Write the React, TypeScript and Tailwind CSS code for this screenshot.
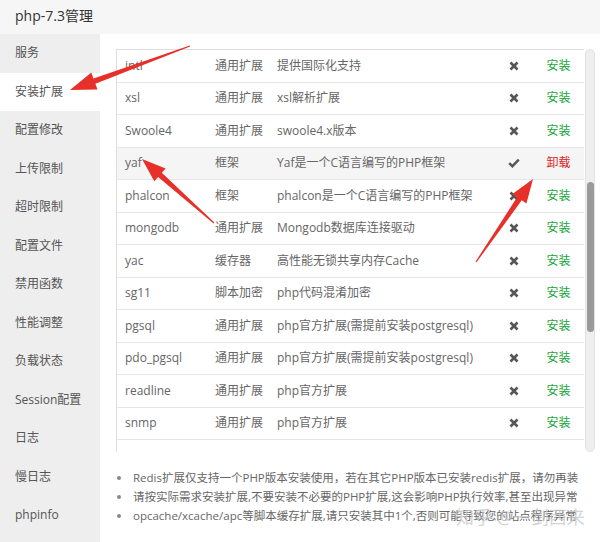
import React from "react";

const FONT = '"Open Sans", "Noto Sans CJK SC", sans-serif';

type Row = { name: string; type: string; desc: string; installed?: boolean; hover?: boolean };

const rows: Row[] = [
  { name: "intl", type: "通用扩展", desc: "提供国际化支持" },
  { name: "xsl", type: "通用扩展", desc: "xsl解析扩展" },
  { name: "Swoole4", type: "通用扩展", desc: "swoole4.x版本" },
  { name: "yaf", type: "框架", desc: "Yaf是一个C语言编写的PHP框架", installed: true, hover: true },
  { name: "phalcon", type: "框架", desc: "phalcon是一个C语言编写的PHP框架" },
  { name: "mongodb", type: "通用扩展", desc: "Mongodb数据库连接驱动" },
  { name: "yac", type: "缓存器", desc: "高性能无锁共享内存Cache" },
  { name: "sg11", type: "脚本加密", desc: "php代码混淆加密" },
  { name: "pgsql", type: "通用扩展", desc: "php官方扩展(需提前安装postgresql)" },
  { name: "pdo_pgsql", type: "通用扩展", desc: "php官方扩展(需提前安装postgresql)" },
  { name: "readline", type: "通用扩展", desc: "php官方扩展" },
  { name: "snmp", type: "通用扩展", desc: "php官方扩展" },
];

const menu = [
  "服务",
  "安装扩展",
  "配置修改",
  "上传限制",
  "超时限制",
  "配置文件",
  "禁用函数",
  "性能调整",
  "负载状态",
  "Session配置",
  "日志",
  "慢日志",
  "phpinfo",
];

const notes = [
  "Redis扩展仅支持一个PHP版本安装使用，若在其它PHP版本已安装redis扩展，请勿再装",
  "请按实际需求安装扩展,不要安装不必要的PHP扩展,这会影响PHP执行效率,甚至出现异常",
  "opcache/xcache/apc等脚本缓存扩展,请只安装其中1个,否则可能导致您的站点程序异常",
];

function Cross() {
  return (
    <svg width="10" height="10" viewBox="0 0 10 10">
      <path d="M1.5 1.5 L8.5 8.5 M8.5 1.5 L1.5 8.5" stroke="#555" strokeWidth="2.6" strokeLinecap="butt" />
    </svg>
  );
}

function Check() {
  return (
    <svg width="12" height="10" viewBox="0 0 12 10">
      <path d="M1.2 5.2 L4.4 8.2 L10.8 1.6" stroke="#555" strokeWidth="2.4" fill="none" />
    </svg>
  );
}

function arrowPoints(tx: number, ty: number, px: number, py: number, L: number, W: number) {
  const dx = px - tx;
  const dy = py - ty;
  const len = Math.hypot(dx, dy);
  const ux = dx / len;
  const uy = dy / len;
  const nx = -uy;
  const ny = ux;
  const bx = px - ux * L;
  const by = py - uy * L;
  const pts: [number, number][] = [
    [tx + nx * 0.6, ty + ny * 0.6],
    [bx + nx * 2.8, by + ny * 2.8],
    [bx + nx * W, by + ny * W],
    [px, py],
    [bx - nx * W, by - ny * W],
    [bx - nx * 2.8, by - ny * 2.8],
    [tx - nx * 0.6, ty - ny * 0.6],
  ];
  return pts.map((p) => p.join(",")).join(" ");
}

export default function App() {
  return (
    <div className="relative w-[600px] h-[542px] overflow-hidden bg-white" style={{ fontFamily: FONT }}>
      <div className="h-[34px] bg-[#f6f6f6] flex items-center pl-[15px] pb-[3px] text-[14px] text-[#333]">
        php-7.3管理
      </div>
      <div className="flex h-[508px]">
        <div className="w-[100px] bg-[#eeeeee] flex flex-col">
          {menu.map((m, i) => (
            <div
              key={m}
              className={
                "h-[38.5px] shrink-0 flex items-center pl-[15px] text-[12px] text-[#555] " +
                (i === 1 ? "bg-white" : "")
              }
            >
              {m}
            </div>
          ))}
        </div>
        <div className="flex-1 bg-white pl-[16px] pt-[15px]">
          <div className="flex h-[403px] w-[481px]">
            <div className="w-[468px] border-l border-t border-[#dddddd] h-full">
              {rows.map((r) => (
                <div
                  key={r.name}
                  className={
                    "grid grid-cols-[90px_62px_222px_40px_53px] h-[32.5px] border-b border-[#e6e6e6] items-center text-[12px] text-[#666] " +
                    (r.hover ? "bg-[#f5f5f5]" : "")
                  }
                >
                  <div className="pl-[8px] whitespace-nowrap">{r.name}</div>
                  <div className="pl-[8px] whitespace-nowrap">{r.type}</div>
                  <div className="pl-[8px] whitespace-nowrap">{r.desc}</div>
                  <div className="flex justify-center pl-[6px]">{r.installed ? <Check /> : <Cross />}</div>
                  <div
                    className={"flex justify-center pl-[2px] " + (r.installed ? "text-[#dd2222]" : "text-[#20a53a]")}
                  >
                    {r.installed ? "卸载" : "安装"}
                  </div>
                </div>
              ))}
            </div>
            <div className="w-[13px] h-full pl-[1px] pr-[2px]">
              <div className="h-full w-full bg-[#efefef] rounded-[5px] border border-[#e2e2e2] flex flex-col items-center">
                <div className="h-[132px] shrink-0" />
                <div className="h-[150px] w-[7px] bg-[#9a9a9a] rounded-[4px]" />
              </div>
            </div>
          </div>
          <ul className="mt-[16px] flex flex-col">
            {notes.map((n) => (
              <li key={n} className="flex items-center h-[19px] text-[11.5px] text-[#666] whitespace-nowrap">
                <span className="w-[4px] h-[4px] rounded-full bg-[#888] ml-[1px] mr-[12px] shrink-0" />
                {n}
              </li>
            ))}
          </ul>
        </div>
      </div>

      <div className="absolute left-[456px] top-[505px] text-[18px] leading-[24px] text-[#c8c8c8]/80 whitespace-nowrap pointer-events-none">
        知乎 @一剑西来
      </div>

      <svg className="absolute left-0 top-0 pointer-events-none" width="600" height="542" viewBox="0 0 600 542">
        <polygon points={arrowPoints(190, 46, 70, 90, 26, 9)} fill="#e8302a" />
        <polygon points={arrowPoints(214, 223, 142, 159, 24, 8.5)} fill="#e8302a" />
        <polygon points={arrowPoints(476, 262, 533, 179, 24, 8.5)} fill="#e8302a" />
      </svg>
    </div>
  );
}
